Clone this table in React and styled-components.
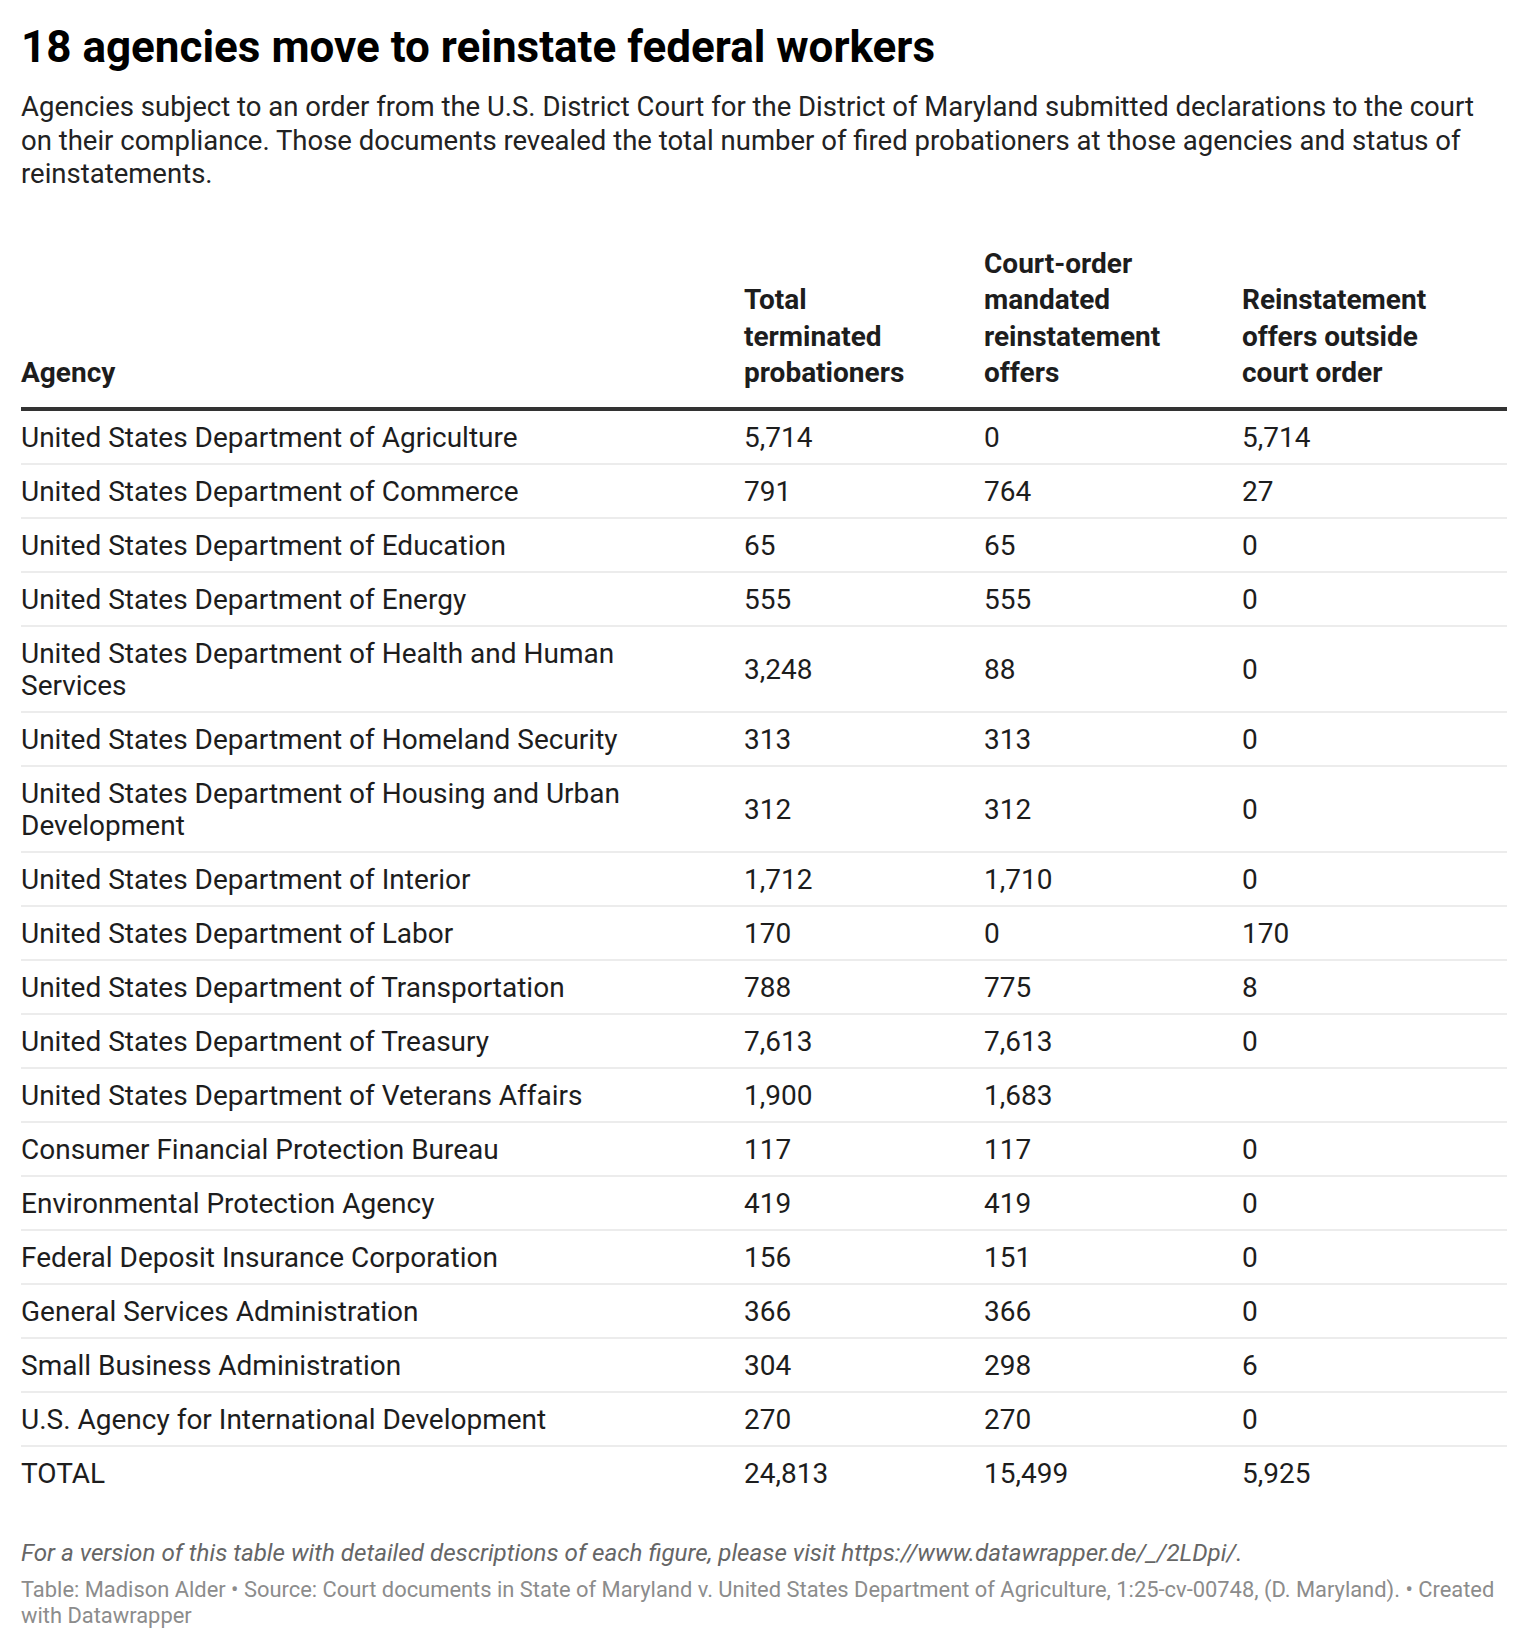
import React from "react";
import styled, { createGlobalStyle } from "styled-components";

const GlobalStyle = createGlobalStyle`
	body {
		margin: 0;
		background: #ffffff;
		font-family: Roboto, "Liberation Sans", sans-serif;
		color: #1d1d1d;
	}
`;

const Container = styled.div`
	padding: 21px 21px 20px 21px;
`;

const Title = styled.h1`
	margin: 0;
	font-size: 44px;
	line-height: 52px;
	font-weight: 700;
	color: #000;
`;

const Description = styled.p`
	margin: 17px 0 0 0;
	font-size: 27.5px;
	line-height: 33.7px;
	color: #222;
`;

const Table = styled.table`
	width: 100%;
	margin-top: 55px;
	border-collapse: collapse;
	table-layout: fixed;
`;

const HeadCell = styled.th`
	box-sizing: border-box;
	width: ${(props) => props.w}px;
	text-align: left;
	vertical-align: bottom;
	font-size: 28px;
	line-height: 36.3px;
	font-weight: 700;
	color: #1d1d1d;
	padding: 0 40px 16px 0;
	border-bottom: 4px solid #333;
`;

const Row = styled.tr`
	border-bottom: ${(props) => (props.last ? "none" : "2px solid #ececec")};
`;

const Cell = styled.td`
	box-sizing: border-box;
	font-size: 28px;
	line-height: 32px;
	vertical-align: middle;
	padding: 11px 40px 9px 0;
	color: #1d1d1d;
`;

const Footer = styled.div`
	margin-top: 39px;
`;

const Note = styled.div`
	font-size: 24.2px;
	font-style: italic;
	color: #666;
	line-height: 30px;
`;

const Source = styled.div`
	margin-top: 9px;
	font-size: 21.9px;
	color: #8c8c8c;
	line-height: 26px;
`;

const columns = [
	{ label: "Agency", w: 723 },
	{ label: "Total terminated probationers", w: 240 },
	{ label: "Court-order mandated reinstatement offers", w: 258 },
	{ label: "Reinstatement offers outside court order", w: 265 },
];

const rows = [
	["United States Department of Agriculture", "5,714", "0", "5,714"],
	["United States Department of Commerce", "791", "764", "27"],
	["United States Department of Education", "65", "65", "0"],
	["United States Department of Energy", "555", "555", "0"],
	["United States Department of Health and Human Services", "3,248", "88", "0"],
	["United States Department of Homeland Security", "313", "313", "0"],
	["United States Department of Housing and Urban Development", "312", "312", "0"],
	["United States Department of Interior", "1,712", "1,710", "0"],
	["United States Department of Labor", "170", "0", "170"],
	["United States Department of Transportation", "788", "775", "8"],
	["United States Department of Treasury", "7,613", "7,613", "0"],
	["United States Department of Veterans Affairs", "1,900", "1,683", ""],
	["Consumer Financial Protection Bureau", "117", "117", "0"],
	["Environmental Protection Agency", "419", "419", "0"],
	["Federal Deposit Insurance Corporation", "156", "151", "0"],
	["General Services Administration", "366", "366", "0"],
	["Small Business Administration", "304", "298", "6"],
	["U.S. Agency for International Development", "270", "270", "0"],
	["TOTAL", "24,813", "15,499", "5,925"],
];

const App = () => {
	return (
		<Container>
			<GlobalStyle />
			<Title>18 agencies move to reinstate federal workers</Title>
			<Description>
				Agencies subject to an order from the U.S. District Court for the
				District of Maryland submitted declarations to the court on their
				compliance. Those documents revealed the total number of fired
				probationers at those agencies and status of reinstatements.
			</Description>
			<Table>
				<thead>
					<tr>
						{columns.map((col) => (
							<HeadCell key={col.label} w={col.w}>
								{col.label}
							</HeadCell>
						))}
					</tr>
				</thead>
				<tbody>
					{rows.map((row, idx) => (
						<Row key={row[0]} last={idx === rows.length - 1}>
							{row.map((value, i) => (
								<Cell key={i}>{value}</Cell>
							))}
						</Row>
					))}
				</tbody>
			</Table>
			<Footer>
				<Note>
					For a version of this table with detailed descriptions of each
					figure, please visit https://www.datawrapper.de/_/2LDpi/.
				</Note>
				<Source>
					Table: Madison Alder • Source: Court documents in State of Maryland
					v. United States Department of Agriculture, 1:25-cv-00748, (D.
					Maryland). • Created with Datawrapper
				</Source>
			</Footer>
		</Container>
	);
};

export default App;
